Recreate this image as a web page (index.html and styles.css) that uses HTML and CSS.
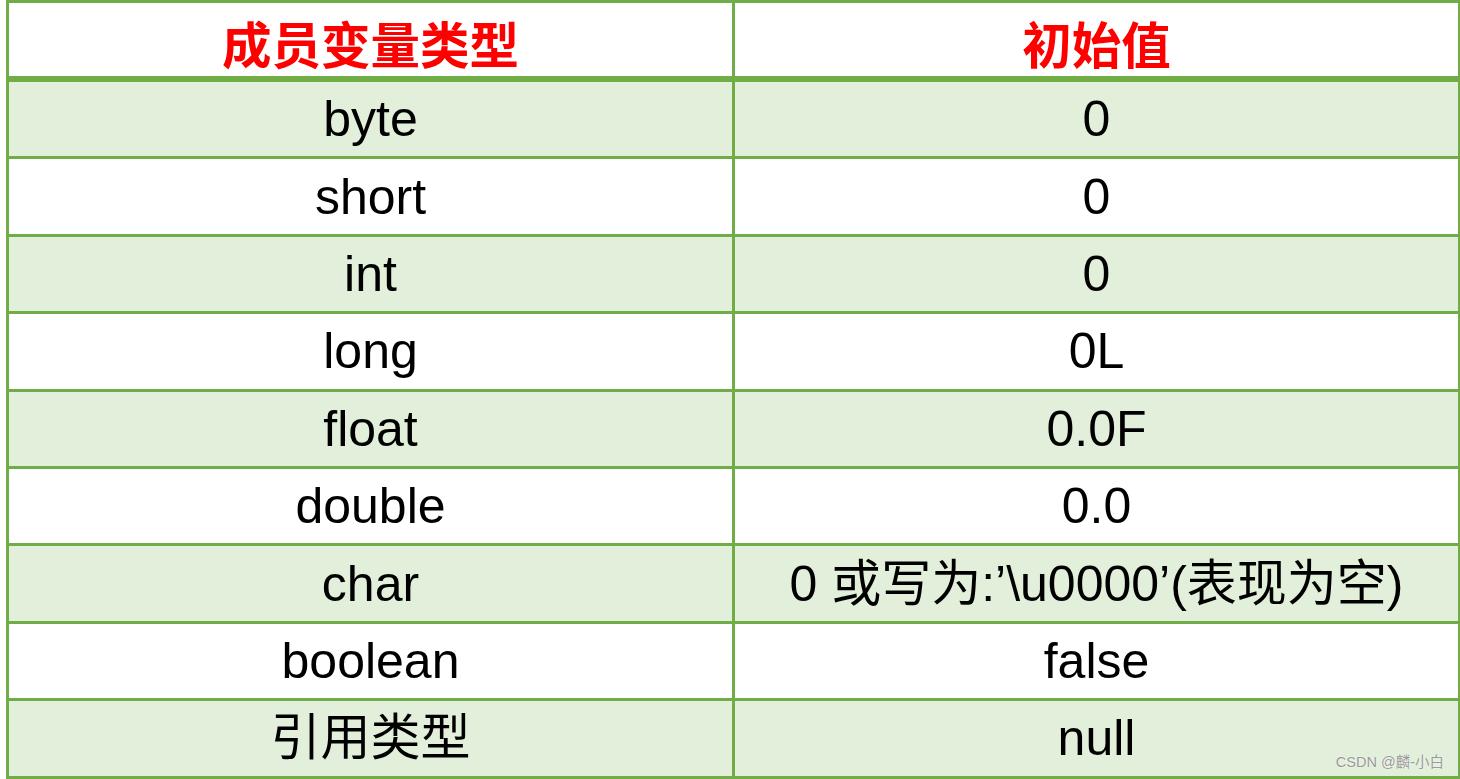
FILE: index.html
```html
<!DOCTYPE html>
<html lang="zh-CN">
<head>
<meta charset="utf-8">
<title>成员变量初始值</title>
<link rel="stylesheet" href="styles.css">
</head>
<body>
<div class="page">
  <div class="table">
    <div class="cell head">成员变量类型</div>
    <div class="cell head">初始值</div>

    <div class="cell shade">byte</div>
    <div class="cell shade">0</div>

    <div class="cell">short</div>
    <div class="cell">0</div>

    <div class="cell shade">int</div>
    <div class="cell shade">0</div>

    <div class="cell">long</div>
    <div class="cell">0L</div>

    <div class="cell shade">float</div>
    <div class="cell shade">0.0F</div>

    <div class="cell">double</div>
    <div class="cell">0.0</div>

    <div class="cell shade">char</div>
    <div class="cell shade">0 或写为:’\u0000’(表现为空)</div>

    <div class="cell">boolean</div>
    <div class="cell">false</div>

    <div class="cell shade">引用类型</div>
    <div class="cell shade">null</div>
  </div>
  <div class="watermark">CSDN @麟-小白</div>
</div>
</body>
</html>
```

FILE: styles.css
```css
html, body {
  margin: 0;
  padding: 0;
  background: #ffffff;
}

.page {
  position: relative;
  width: 1460px;
  height: 779px;
  overflow: hidden;
}

.table {
  margin-left: 6px;
  width: 1454px;
  box-sizing: border-box;
  background: #70ad47;
  padding: 3px 2px 3px 3px;
  display: grid;
  grid-template-columns: 723px 723px;
  grid-template-rows: 76px repeat(9, 74.4px);
  column-gap: 3px;
  row-gap: 3px;
}

.cell {
  background: #ffffff;
  display: flex;
  align-items: center;
  justify-content: center;
  font-family: "Liberation Sans", "Noto Sans CJK SC", sans-serif;
  font-size: 50px;
  color: #000000;
  line-height: 1;
  white-space: nowrap;
}

.cell.shade {
  background: #e2efda;
}

.cell.head {
  margin-bottom: 3px;
  padding-top: 6px;
  box-sizing: border-box;
  font-family: "Noto Sans CJK SC", sans-serif;
  font-weight: 700;
  font-size: 49.5px;
  color: #ff0000;
}

.watermark {
  position: absolute;
  right: 16px;
  bottom: 8px;
  font-family: "Liberation Sans", "Noto Sans CJK SC", sans-serif;
  font-size: 14.5px;
  color: #9a9a9a;
  text-shadow: 0 0 2px #ffffff;
}
```
